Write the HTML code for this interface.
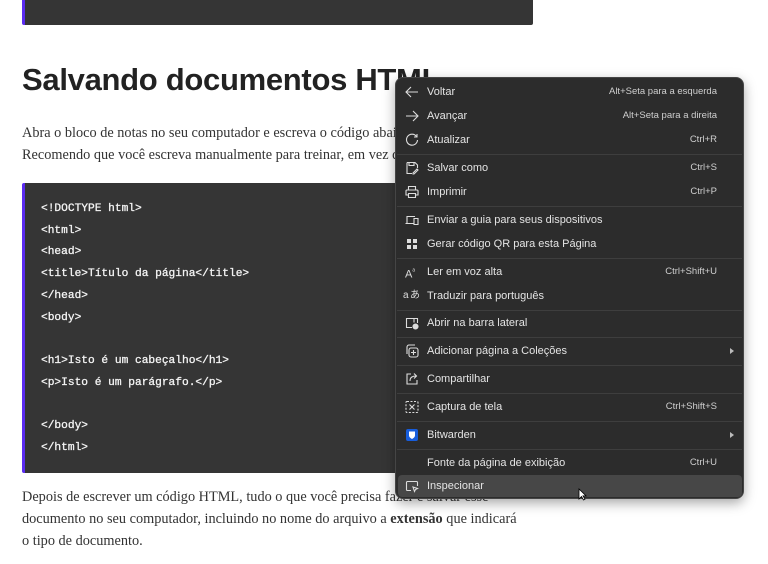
<!DOCTYPE html>
<html><head><meta charset="utf-8"><style>
*{margin:0;padding:0;box-sizing:border-box}
body{width:768px;height:564px;background:#fff;position:relative;overflow:hidden;font-family:"Liberation Serif",serif;color:#333}
.blk{position:absolute;left:22px;width:511px;background:#353535;border-left:3px solid #5b2cf0;border-radius:2px}
h2{position:absolute;left:22px;top:62px;font-family:"Liberation Sans",sans-serif;font-weight:bold;font-size:31px;color:#222;letter-spacing:-0.3px}
.p{position:absolute;left:22px;font-size:14.3px;line-height:22px;color:#333;white-space:nowrap}
.code{position:absolute;left:41px;top:199px;font-family:"Liberation Mono",monospace;font-size:11.2px;line-height:21.7px;color:#f4f4f4;white-space:pre;-webkit-text-stroke:0.3px #f4f4f4}
.menu{position:absolute;left:395px;top:77px;width:349px;height:422px;background:#2c2c2c;border:1px solid #454545;border-radius:8px;box-shadow:0 4px 12px rgba(0,0,0,.35);font-family:"Liberation Sans",sans-serif;color:#e4e4e4}
.it{position:absolute;left:0;width:347px;height:24px;font-size:11px;line-height:24px}
.it .t{position:absolute;left:31px}
.it .k{position:absolute;right:26px;font-size:9.5px;color:#cfcfcf}
.it .i{position:absolute;left:9px;top:5px;width:14px;height:14px}
.sep{position:absolute;left:1px;right:1px;height:1px;background:#3e3e3e}
.arr{position:absolute;right:9px;top:9px;width:0;height:0;border-left:4px solid #bbb;border-top:3px solid transparent;border-bottom:3px solid transparent}
</style></head><body>
<div class="blk" style="top:-5px;height:30px"><span style="position:absolute;left:16px;top:-6px;color:#ddd;font-style:italic;font-size:14px">Eliue Cristian</span></div>
<h2>Salvando documentos HTML</h2>
<div class="p" style="top:122px">Abra o bloco de notas no seu computador e escreva o código abaixo.<br>Recomendo que você escreva manualmente para treinar, em vez de copiar.</div>
<div class="blk" style="top:183px;height:290px"></div>
<div class="code">&lt;!DOCTYPE html&gt;
&lt;html&gt;
&lt;head&gt;
&lt;title&gt;Título da página&lt;/title&gt;
&lt;/head&gt;
&lt;body&gt;

&lt;h1&gt;Isto é um cabeçalho&lt;/h1&gt;
&lt;p&gt;Isto é um parágrafo.&lt;/p&gt;

&lt;/body&gt;
&lt;/html&gt;</div>
<div class="p" style="top:486px">Depois de escrever um código HTML, tudo o que você precisa fazer é salvar esse<br>documento no seu computador, incluindo no nome do arquivo a <b>extensão</b> que indicará<br>o tipo de documento.</div>

<div class="menu">
<div class="it" style="top:2px"><svg class="i" viewBox="0 0 14 14" fill="none" stroke="#ddd" stroke-width="1.1"><path d="M13 7H1M6 2L1 7l5 5"/></svg><span class="t">Voltar</span><span class="k">Alt+Seta para a esquerda</span></div>
<div class="it" style="top:26px"><svg class="i" viewBox="0 0 14 14" fill="none" stroke="#ddd" stroke-width="1.1"><path d="M1 7h12M8 2l5 5-5 5"/></svg><span class="t">Avançar</span><span class="k">Alt+Seta para a direita</span></div>
<div class="it" style="top:50px"><svg class="i" viewBox="0 0 14 14" fill="none" stroke="#ddd" stroke-width="1.1"><path d="M11.5 3.5A5.5 5.5 0 1 0 12.5 7M12 1v3H9"/></svg><span class="t">Atualizar</span><span class="k">Ctrl+R</span></div>
<div class="sep" style="top:76px"></div>
<div class="it" style="top:78px"><svg class="i" viewBox="0 0 14 14" fill="none" stroke="#ddd" stroke-width="1.1"><path d="M2 1.5h8l2.5 2.5v3M2 1.5v11h5M4 1.5v3h5v-3M8 12l4-4 1 1-4 4H8z"/></svg><span class="t">Salvar como</span><span class="k">Ctrl+S</span></div>
<div class="it" style="top:102px"><svg class="i" viewBox="0 0 14 14" fill="none" stroke="#ddd" stroke-width="1.1"><path d="M3.5 5V1.5h7V5M2 5h10a1 1 0 0 1 1 1v4h-2.5M3.5 10H1V6a1 1 0 0 1 1-1M3.5 8.5h7v4h-7z"/></svg><span class="t">Imprimir</span><span class="k">Ctrl+P</span></div>
<div class="sep" style="top:128px"></div>
<div class="it" style="top:130px"><svg class="i" viewBox="0 0 14 14" fill="none" stroke="#ddd" stroke-width="1.1"><path d="M2 10V3.5h8M.5 10.5h8M9 5.5h4v6H9z"/></svg><span class="t">Enviar a guia para seus dispositivos</span></div>
<div class="it" style="top:154px"><svg class="i" viewBox="0 0 14 14" fill="#ddd"><rect x="2" y="2" width="4" height="4"/><rect x="8" y="2" width="4" height="4"/><rect x="2" y="8" width="4" height="4"/><rect x="8" y="8" width="4" height="4"/></svg><span class="t">Gerar código QR para esta Página</span></div>
<div class="sep" style="top:180px"></div>
<div class="it" style="top:182px"><span class="i" style="font-size:11px;line-height:14px;color:#ddd">A<sup style="font-size:7px">ᵃ</sup></span><span class="t">Ler em voz alta</span><span class="k">Ctrl+Shift+U</span></div>
<div class="it" style="top:206px"><span class="i" style="font-size:10px;line-height:14px;color:#ddd;left:7px">a</span><span class="i" style="font-size:10px;line-height:14px;color:#ddd;left:14px">あ</span><span class="t">Traduzir para português</span></div>
<div class="sep" style="top:232px"></div>
<div class="it" style="top:233px"><svg class="i" viewBox="0 0 14 14" fill="none" stroke="#ddd" stroke-width="1.1"><path d="M7 11.5H1.5v-9h11V7M9 2.5v4"/><circle cx="10.5" cy="10.5" r="2.5" fill="#ddd"/></svg><span class="t">Abrir na barra lateral</span></div>
<div class="sep" style="top:259px"></div>
<div class="it" style="top:261px"><svg class="i" viewBox="0 0 14 14" fill="none" stroke="#ddd" stroke-width="1.1"><path d="M2 10V3a2 2 0 0 1 2-2h6"/><rect x="4" y="4" width="9" height="9" rx="2"/><path d="M8.5 6v5M6 8.5h5"/></svg><span class="t">Adicionar página a Coleções</span><span class="arr"></span></div>
<div class="sep" style="top:287px"></div>
<div class="it" style="top:289px"><svg class="i" viewBox="0 0 14 14" fill="none" stroke="#ddd" stroke-width="1.1"><path d="M6 2H2v10h10V8M5 9c0-4 3-5 6-5M9 1.5 11.5 4 9 6.5"/></svg><span class="t">Compartilhar</span></div>
<div class="sep" style="top:315px"></div>
<div class="it" style="top:317px"><svg class="i" viewBox="0 0 14 14" fill="none" stroke="#ddd" stroke-width="1.1" stroke-dasharray="2 1.5"><rect x="1" y="1.5" width="12" height="11" rx="1"/><path d="M4.5 4.5l5 5M9.5 4.5l-5 5" stroke-dasharray="none"/></svg><span class="t">Captura de tela</span><span class="k">Ctrl+Shift+S</span></div>
<div class="sep" style="top:343px"></div>
<div class="it" style="top:345px"><svg class="i" viewBox="0 0 14 14"><rect x="1" y="1" width="12" height="12" rx="2" fill="#175ddc"/><path d="M4 3.5h6v4c0 2-3 3.5-3 3.5S4 9.5 4 7.5z" fill="#fff"/></svg><span class="t">Bitwarden</span><span class="arr"></span></div>
<div class="sep" style="top:371px"></div>
<div class="it" style="top:373px"><span class="t">Fonte da página de exibição</span><span class="k">Ctrl+U</span></div>
<div class="it" style="top:397px;left:2px;width:344px;height:22px;background:#474747;border-radius:4px;line-height:22px"><svg class="i" style="top:4px;left:7px" viewBox="0 0 14 14" fill="none" stroke="#ddd" stroke-width="1.1"><path d="M6 11.5H2.5a1 1 0 0 1-1-1v-7a1 1 0 0 1 1-1h9a1 1 0 0 1 1 1V7M8 8l4.5 1.5-2 1 -1 2z"/></svg><span class="t" style="left:29px">Inspecionar</span></div>
<svg style="position:absolute;left:182px;top:410px" width="9" height="13" viewBox="0 0 9 13"><path d="M1 1v10l2.5-2.5 2 3.5 1.5-.8-2-3.3H8z" fill="#fff" stroke="#000" stroke-width=".8"/></svg>
</div>
</body></html>
